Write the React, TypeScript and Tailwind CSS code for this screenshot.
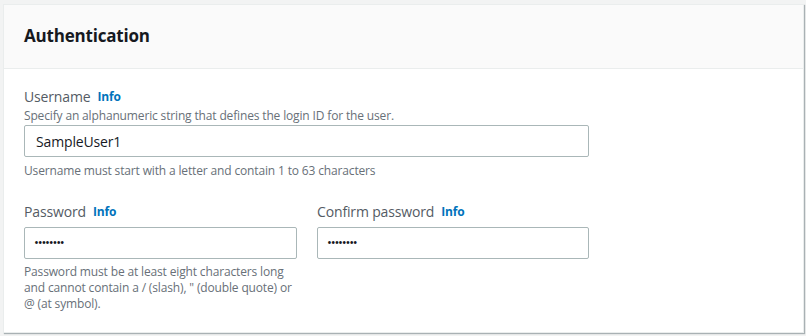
export default function App() {
  return (
    <div
      className="w-[806px] h-[336px] bg-[#f2f3f3] pt-[4px] pl-[3px] overflow-hidden"
      style={{ fontFamily: '"Open Sans", "Noto Sans", Arial, sans-serif' }}
    >
      <div className="w-[801px] h-[329px] bg-white border border-[#eaeded] shadow-[1px_1px_1px_rgba(0,28,36,0.3)]">
        {/* Header */}
        <div className="h-[64px] bg-[#fafafa] border-b border-[#eaeded] px-[20px] pb-[1px] flex items-center">
          <h2 className="text-[17px] leading-[24px] font-bold tracking-[-0.2px] text-[#16191f]">Authentication</h2>
        </div>

        {/* Body */}
        <div className="px-[20px] pt-[17px] tracking-[-0.15px]">
          <div className="flex items-center gap-[7px]">
            <span className="text-[14px] leading-[22px] text-[#545b64]">Username</span>
            <span className="text-[12px] leading-[22px] font-bold text-[#0073bb]">Info</span>
          </div>
          <p className="text-[12px] leading-[16px] text-[#687078]">
            Specify an alphanumeric string that defines the login ID for the user.
          </p>
          <div className="mt-[1px] w-[565px] h-[32px] border border-[#aab7b8] rounded-[2px] px-[11px] flex items-center text-[14px] text-[#16191f]">
            SampleUser1
          </div>
          <p className="mt-[6px] text-[12px] leading-[16px] text-[#687078]">
            Username must start with a letter and contain 1 to 63 characters
          </p>

          <div className="mt-[22px] flex gap-[20px]">
            <div className="w-[273px]">
              <div className="flex items-center gap-[7px]">
                <span className="text-[14px] leading-[22px] text-[#545b64]">Password</span>
                <span className="text-[12px] leading-[22px] font-bold text-[#0073bb]">Info</span>
              </div>
              <div className="mt-[4px] h-[32px] border border-[#aab7b8] rounded-[2px] px-[9px] flex items-center text-[13px] text-[#16191f] tracking-[-1.2px]">
                ••••••••
              </div>
              <p className="mt-[5px] text-[12px] leading-[16px] text-[#687078]">
                Password must be at least eight characters long and cannot contain a / (slash), " (double quote) or @ (at symbol).
              </p>
            </div>
            <div className="w-[272px]">
              <div className="flex items-center gap-[7px]">
                <span className="text-[14px] leading-[22px] text-[#545b64]">Confirm password</span>
                <span className="text-[12px] leading-[22px] font-bold text-[#0073bb]">Info</span>
              </div>
              <div className="mt-[4px] h-[32px] border border-[#aab7b8] rounded-[2px] px-[9px] flex items-center text-[13px] text-[#16191f] tracking-[-1.2px]">
                ••••••••
              </div>
            </div>
          </div>
        </div>
      </div>
    </div>
  );
}
